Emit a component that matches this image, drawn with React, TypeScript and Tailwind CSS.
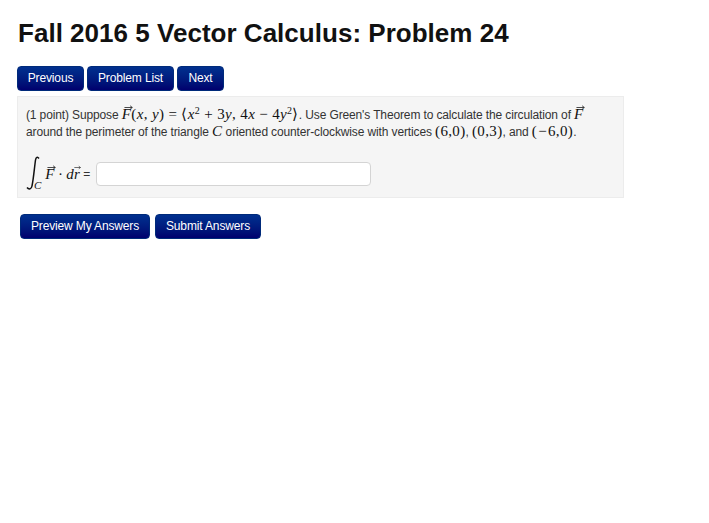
const SANS = "font-['Liberation_Sans',Arial,sans-serif]";
const btn =
  "h-[25px] rounded-[4px] border border-[#002a7a] bg-gradient-to-b from-[#00308f] to-[#00006e] pb-[2px] text-[12px] leading-none tracking-[-0.14px] text-white";

// small arrow that sits over F and r in the math
function Vec({ children, wide }: { children: React.ReactNode; wide?: boolean }) {
  return (
    <span className="relative inline-block">
      <svg
        viewBox="0 0 10 5"
        className={`absolute -top-[2px] ${wide ? "left-[2px] w-[9px]" : "left-0 w-[7px]"} h-[5px]`}
        fill="none"
        stroke="#222"
        strokeWidth="0.9"
      >
        <path d="M0.5 2.5H9M6.8 0.6 9.3 2.5 6.8 4.4" />
      </svg>
      {children}
    </span>
  );
}

function M({ children }: { children: React.ReactNode }) {
  return (
    <span className="font-['Liberation_Serif',serif] text-[15px] leading-none tracking-[0.36px] text-[#111]">
      {children}
    </span>
  );
}

function I({ children }: { children: React.ReactNode }) {
  return <i>{children}</i>;
}

function Sq() {
  return <sup className="text-[10px] leading-none">2</sup>;
}

export default function App() {
  return (
    <div className={`${SANS} min-h-[523px] w-[709px] bg-white text-[#333]`}>
      <h1 className="pl-[18px] pt-[18px] text-[26px] font-bold leading-[31px] tracking-[0.02px] text-[#111]">
        Fall 2016 5 Vector Calculus: Problem 24
      </h1>

      <div className="mt-[17px] flex gap-[3px] pl-[17px]">
        <button className={`${btn} w-[67px]`}>Previous</button>
        <button className={`${btn} w-[87px]`}>Problem List</button>
        <button className={`${btn} w-[47px]`}>Next</button>
      </div>

      <div className="ml-[17px] mt-[5px] h-[102px] w-[607px] border border-[#ececec] bg-[#f5f5f5] pl-[8px] pt-[10px]">
        <p className="whitespace-nowrap text-[12px] leading-[17px] tracking-[-0.13px] text-[#333]">
          (1 point) Suppose{" "}
          <M>
            <Vec wide>
              <I>F</I>
            </Vec>
            (<I>x</I>, <I>y</I>) = ⟨<I>x</I>
            <Sq /> + 3<I>y</I>, 4<I>x</I> − 4<I>y</I>
            <Sq />⟩
          </M>
          . Use Green's Theorem to calculate the circulation of{" "}
          <M>
            <Vec wide>
              <I>F</I>
            </Vec>
          </M>
          <br />
          around the perimeter of the triangle{" "}
          <M>
            <I>C</I>
          </M>{" "}
          oriented counter-clockwise with vertices <M>(6,0)</M>, <M>(0,3)</M>, and{" "}
          <M>
            (<span className="mx-[1px]">−</span>6,0)
          </M>
          .
        </p>

        <div className="mt-[15px] flex items-start">
          <svg viewBox="0 0 14 34" className="h-[34px] w-[14px] shrink-0" fill="none" stroke="#111" strokeWidth="1.5">
            <path d="M13 2.5C11.5 0.5 10 1 9.5 4C8.5 11 7.5 23 6 30C5.5 33 3 34 1 31.5" />
          </svg>
          <i className="-ml-[6px] mt-[24px] font-['Liberation_Serif',serif] text-[11px] leading-[11px] text-[#111]">C</i>
          <span className="ml-[4px] mt-[6px] flex items-center">
            <M>
              <Vec wide>
                <I>F</I>
              </Vec>
              <span className="mx-[3px]">·</span>
              <I>d</I>
              <Vec>
                <I>r</I>
              </Vec>
            </M>
            <span className="ml-[3px] text-[12px]">=</span>
            <input
              type="text"
              className="ml-[6px] h-[24px] w-[275px] rounded-[4px] border border-[#d4d4d4] bg-white"
            />
          </span>
        </div>
      </div>

      <div className="mt-[16px] flex gap-[5px] pl-[20px]">
        <button className={`${btn} w-[130px]`}>Preview My Answers</button>
        <button className={`${btn} w-[106px]`}>Submit Answers</button>
      </div>
    </div>
  );
}
